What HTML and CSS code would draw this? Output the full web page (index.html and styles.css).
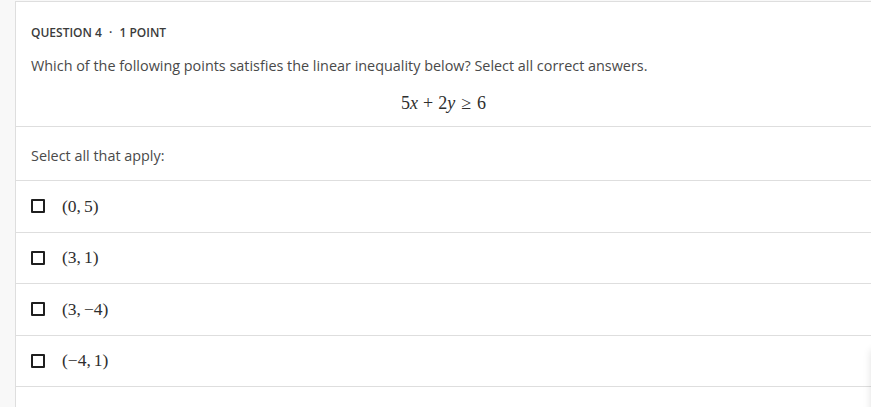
FILE: index.html
```html
<!DOCTYPE html>
<html>
<head>
<meta charset="utf-8">
<link rel="stylesheet" href="styles.css">
</head>
<body>
<div class="page">
  <div class="gutter"></div>
  <div class="card">
    <div class="header">
      <div class="title">QUESTION 4 <span class="dot">·</span> 1 POINT</div>
      <div class="prompt">Which of the following points satisfies the linear inequality below? Select all correct answers.</div>
      <div class="formula"><span class="math big">5<i>x</i><span class="op">+</span>2<i>y</i><span class="rel">≥</span>6</span></div>
    </div>
    <div class="instr">Select all that apply:</div>
    <div class="option"><span class="box"></span><span class="math">(0,<span class="th"></span>5)</span></div>
    <div class="option"><span class="box"></span><span class="math">(3,<span class="th"></span>1)</span></div>
    <div class="option"><span class="box"></span><span class="math">(3,<span class="th"></span>−4)</span></div>
    <div class="option"><span class="box"></span><span class="math">(−4,<span class="th"></span>1)</span></div>
  </div>
</div>
<div class="floater"></div>
</body>
</html>
```
FILE: styles.css
```css
html, body {
  margin: 0;
  padding: 0;
  height: 100%;
  overflow: hidden;
  background: #f8f8f8;
}
.page {
  display: flex;
  padding-top: 1px;
  height: 100%;
  box-sizing: border-box;
  font-family: "Open Sans", "Liberation Sans", sans-serif;
}
.gutter {
  width: 15px;
  flex: none;
}
.card {
  flex: 1;
  background: #fff;
  border-left: 1px solid #dedede;
  border-top: 1px solid #dedede;
}
.header {
  padding: 23px 15px 10px 15px;
  border-bottom: 1px solid #dedede;
}
.title {
  font-size: 12px;
  line-height: 16px;
  font-weight: 600;
  color: #3b3b3b;
}
.dot {
  margin: 0 4px;
}
.prompt {
  margin-top: 14px;
  font-size: 14.4px;
  line-height: 22px;
  color: #494949;
}
.formula {
  text-align: center;
  line-height: 26px;
  height: 26px;
  margin-top: 13px;
}
.math {
  font-family: "Liberation Serif", "DejaVu Serif", serif;
  font-size: 17.5px;
  color: #2e2e2e;
}
.math.big {
  font-size: 18px;
}
.math i {
  font-style: italic;
}
.op {
  margin: 0 5px;
}
.rel {
  margin: 0 6px;
}
.th {
  display: inline-block;
  width: 3px;
}
.instr {
  padding: 18px 15px 13px 15px;
  font-size: 14.4px;
  line-height: 22px;
  color: #4a4a4a;
  border-bottom: 1px solid #dedede;
}
.option {
  height: 50.5px;
  display: flex;
  align-items: center;
  padding-left: 15px;
  border-bottom: 1px solid #dedede;
}
.box {
  width: 10px;
  height: 10px;
  border: 2px solid #1f1f1f;
  border-radius: 1px;
  margin-right: 17px;
  flex: none;
}
.floater {
  position: fixed;
  right: -60px;
  top: 350px;
  width: 60px;
  height: 120px;
  background: #fff;
  box-shadow: 0 0 8px rgba(0,0,0,0.12);
}
```
